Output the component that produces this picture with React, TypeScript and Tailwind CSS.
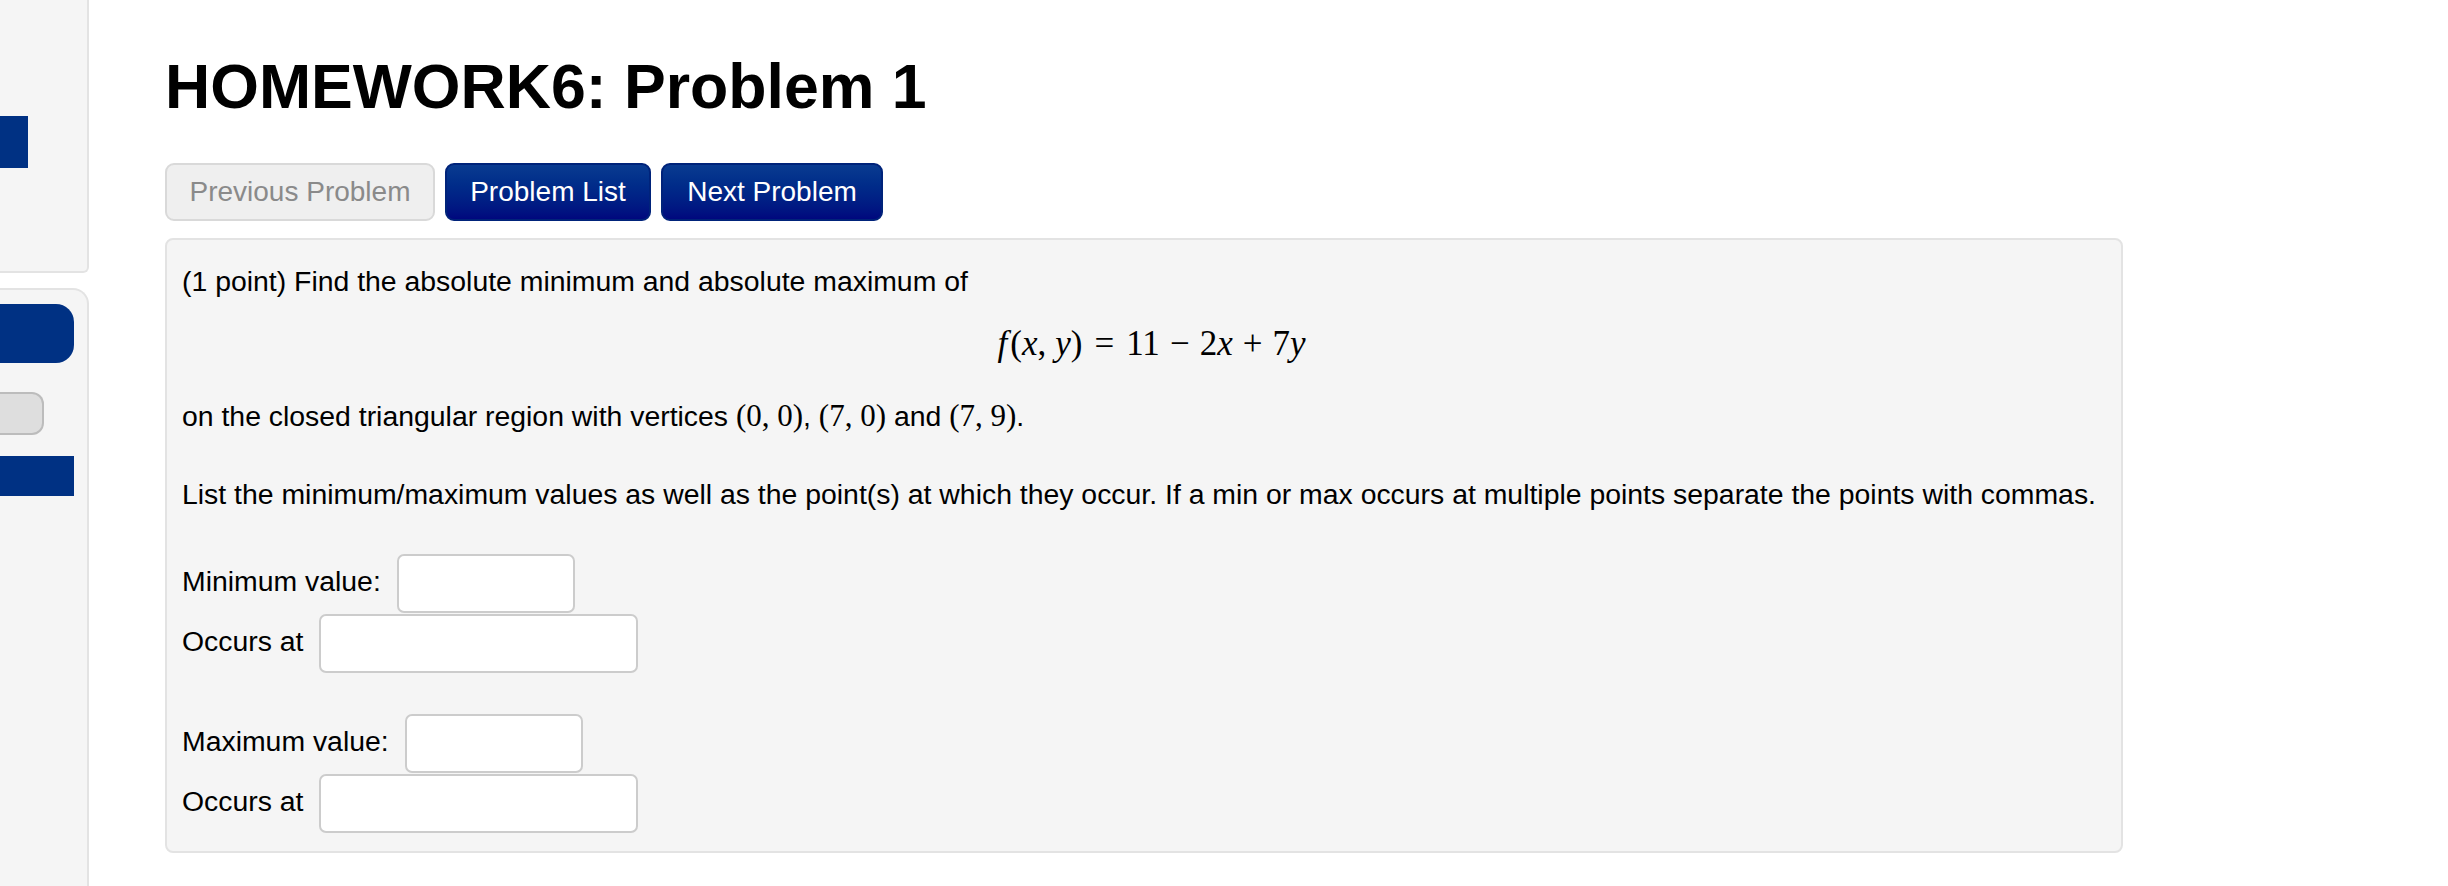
const Math = ({children}: {children: React.ReactNode}) => (
    <span className="font-['Liberation_Serif',serif] text-[31px] leading-none">{children}</span>
);

const AnswerRow = ({label, width}: {label: string; width: string}) => (
    <div className="flex items-center gap-[16px]">
        <div className="pb-[6px] leading-[40px]">{label}</div>
        <input type="text" className={`${width} h-[59px] bg-white border-2 border-[#cccccc] rounded-[7px] outline-none`}/>
    </div>
);

export default function App() {
    return (
        <div className="flex h-[886px] w-[2448px] overflow-hidden bg-white text-black font-['Liberation_Sans',Arial,sans-serif]">
            <aside className="w-[89px] shrink-0 flex flex-col">
                <div className="h-[273px] bg-[#f5f5f5] border-r-2 border-b-2 border-[#e3e3e3] rounded-br-[6px] pt-[116px]">
                    <div className="w-[28px] h-[52px] bg-[#003183]"/>
                </div>
                <div className="mt-[15px] flex-1 bg-[#f5f5f5] border-t-2 border-r-2 border-[#e3e3e3] rounded-tr-[16px] pt-[14px]">
                    <div className="w-[74px] h-[59px] bg-[#003183] rounded-r-[18px]"/>
                    <div className="mt-[29px] w-[44px] h-[43px] bg-[#dedede] border-2 border-l-0 border-[#bcbcbc] rounded-r-[12px]"/>
                    <div className="mt-[21px] w-[74px] h-[40px] bg-[#003183]"/>
                </div>
            </aside>

            <main className="pl-[76px]">
                <h1 className="pt-[52px] text-[62.6px] leading-[68px] font-bold">HOMEWORK6: Problem 1</h1>

                <div className="mt-[43px] flex gap-[10px] text-[28px]">
                    <button className="w-[270px] h-[58px] flex items-center justify-center rounded-[9px] border-2 border-[#d9d9d9] bg-[#efefef] text-[#8a8a8a]">
                        Previous Problem
                    </button>
                    <button className="w-[206px] h-[58px] flex items-center justify-center rounded-[9px] border-2 border-[#00237a] bg-linear-to-b from-[#0a3b90] to-[#00077e] text-white">
                        Problem List
                    </button>
                    <button className="w-[222px] h-[58px] flex items-center justify-center rounded-[9px] border-2 border-[#00237a] bg-linear-to-b from-[#0a3b90] to-[#00077e] text-white">
                        Next Problem
                    </button>
                </div>

                <div className="mt-[17px] w-[1958px] bg-[#f5f5f5] border-2 border-[#e3e3e3] rounded-[8px] pt-[21px] pl-[15px] pb-[18px] text-[28.4px]">
                    <div className="leading-[40px]">(1 point) Find the absolute minimum and absolute maximum of</div>

                    <div className="h-[86px] leading-[86px] text-center font-['Liberation_Serif',serif] text-[35px]">
                        <i className="pr-[3px]">f</i>(<i>x</i>,<span className="ml-[9px]"/><i>y</i>)
                        <span className="mx-[12px]">=</span>11
                        <span className="mx-[10px]">−</span>2<i>x</i>
                        <span className="mx-[10px]">+</span>7<i>y</i>
                    </div>

                    <div className="mt-[9px] leading-[40px]">
                        on the closed triangular region with vertices <Math>(0, 0)</Math>, <Math>(7, 0)</Math> and <Math>(7, 9)</Math>.
                    </div>

                    <div className="mt-[38px] leading-[40px]">
                        List the minimum/maximum values as well as the point(s) at which they occur. If a min or max occurs at multiple points separate the points with commas.
                    </div>

                    <div className="mt-[40px]">
                        <AnswerRow label="Minimum value:" width="w-[178px]"/>
                    </div>
                    <div className="mt-[1px]">
                        <AnswerRow label="Occurs at" width="w-[319px]"/>
                    </div>
                    <div className="mt-[41px]">
                        <AnswerRow label="Maximum value:" width="w-[178px]"/>
                    </div>
                    <div className="mt-[1px]">
                        <AnswerRow label="Occurs at" width="w-[319px]"/>
                    </div>
                </div>
            </main>
        </div>
    );
}
